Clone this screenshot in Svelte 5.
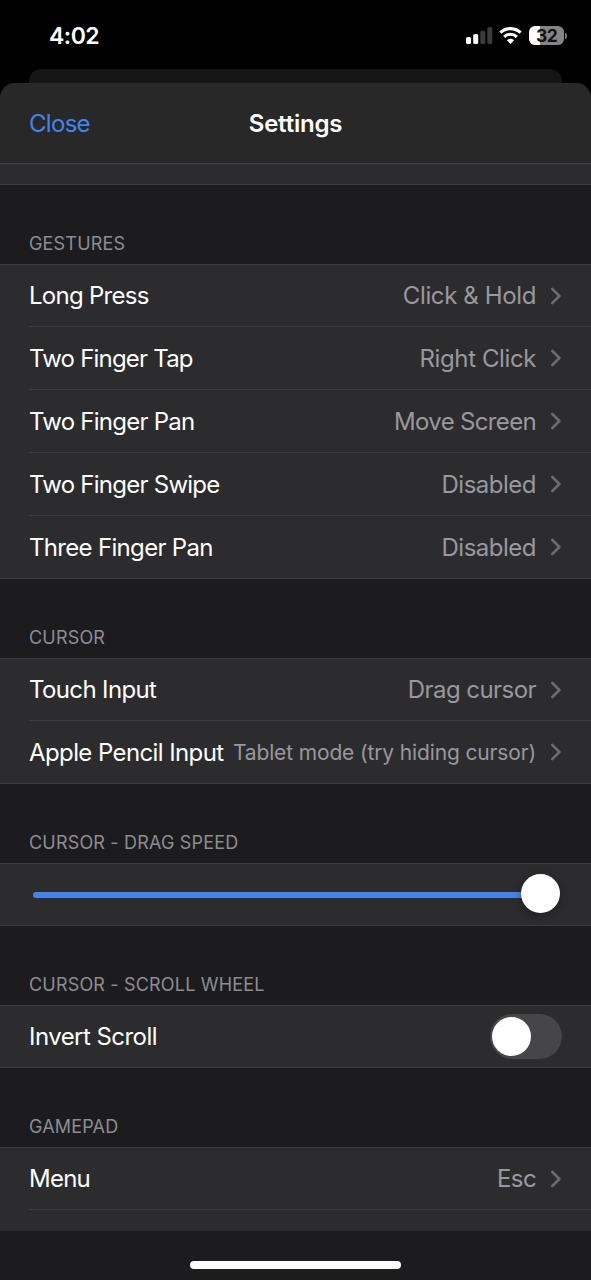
<script>
  // ls / vs: letter spacing in px for the label and the value
  const groups = [
    { title: 'GESTURES', rows: [
      { label: 'Long Press', ls: -0.72, value: 'Click & Hold', vs: -0.38 },
      { label: 'Two Finger Tap', ls: -0.8, value: 'Right Click', vs: -0.4 },
      { label: 'Two Finger Pan', ls: -0.75, value: 'Move Screen', vs: -0.66 },
      { label: 'Two Finger Swipe', ls: -0.75, value: 'Disabled', vs: -0.5 },
      { label: 'Three Finger Pan', ls: -0.68, value: 'Disabled', vs: -0.5 }
    ] },
    { title: 'CURSOR', rows: [
      { label: 'Touch Input', ls: -0.63, value: 'Drag cursor', vs: -0.55 },
      { label: 'Apple Pencil Input', ls: -0.6, value: 'Tablet mode (try hiding cursor)', vs: -0.14, compact: true }
    ] },
    { title: 'CURSOR - DRAG SPEED', rows: [{ slider: 100 }] },
    { title: 'CURSOR - SCROLL WHEEL', rows: [{ label: 'Invert Scroll', ls: -0.55, toggle: true }] },
    { title: 'GAMEPAD', open: true, rows: [{ label: 'Menu', ls: -0.75, value: 'Esc', vs: -0.6 }] }
  ];
</script>

<div class="phone">
  <div class="status">
    <span class="time">4:02</span>
    <div class="indicators">
      <svg class="signal" width="27" height="17" viewBox="0 0 27 17">
        <rect x="0" y="10" width="5" height="7" rx="1.5" fill="#fff" />
        <rect x="7.2" y="7" width="5" height="10" rx="1.5" fill="#fff" />
        <rect x="14.3" y="3.7" width="5" height="13.3" rx="1.5" fill="#3b3b3b" />
        <rect x="21.3" y="0" width="5" height="17" rx="1.5" fill="#3b3b3b" />
      </svg>
      <svg class="wifi" width="23" height="17" viewBox="0 0 23 17">
        <path d="M1.4 5.7 C7 .2 16 .2 21.6 5.7" fill="none" stroke="#fff" stroke-width="3.2" />
        <path d="M5.1 9.8 C8.7 6.4 14.3 6.4 17.9 9.8" fill="none" stroke="#fff" stroke-width="3" />
        <path d="M7.9 13.3 C9.8 11.3 13.2 11.3 15.1 13.3 L11.5 17 Z" fill="#fff" />
      </svg>
      <div class="battery"><span>32</span></div>
      <i class="nub"></i>
    </div>
  </div>
  <div class="behind"></div>
  <div class="sheet">
    <header>
      <span class="close">Close</span>
      <h1>Settings</h1>
      <span></span>
    </header>
    <div class="strip"></div>
    {#each groups as g}
      <h2>{g.title}</h2>
      <section class:open={g.open}>
        {#each g.rows as r}
          <div class="row">
            {#if r.slider}
              <div class="track">
                <div class="fill" style="width: {r.slider}%"></div>
                <div class="knob"></div>
              </div>
            {:else}
              <span class="label" style="letter-spacing: {r.ls}px">{r.label}</span>
              {#if r.toggle}
                <div class="switch"><div class="knob"></div></div>
              {:else}
                <span class="value" class:compact={r.compact} style="letter-spacing: {r.vs}px">{r.value}</span>
                <svg class="chevron" width="12" height="18" viewBox="0 0 12 18">
                  <path d="M2.3 2 L9.4 9 L2.3 16" fill="none" stroke="#6b6b6e" stroke-width="2.7" stroke-linecap="round" stroke-linejoin="round" />
                </svg>
              {/if}
            {/if}
          </div>
        {/each}
      </section>
    {/each}
    <div class="home"><div></div></div>
  </div>
</div>

<style>
  :global(body) { background: #000; }
  .phone {
    width: 591px; height: 1280px; background: #000; overflow: hidden;
    display: flex; flex-direction: column;
    font-family: Inter, "Liberation Sans", sans-serif; color: #fff;
  }
  .status {
    height: 69px; flex: none; box-sizing: border-box; padding: 2px 24px 0 49px;
    display: flex; justify-content: space-between; align-items: center;
  }
  .time { font-size: 23px; font-weight: 600; line-height: 28px; letter-spacing: -0.5px; }
  .indicators { display: flex; align-items: center; }
  .wifi { margin-left: 6px; }
  .battery {
    margin-left: 7px; width: 35px; height: 19px; border-radius: 6px;
    background: linear-gradient(90deg, #fff 11px, #858585 11px);
    display: flex; align-items: center; justify-content: center;
    color: #111; font-size: 17.5px; line-height: 19px; font-weight: 700; letter-spacing: -0.6px;
  }
  .nub { width: 2px; height: 6px; margin-left: 1px; border-radius: 0 3px 3px 0; background: #777; }
  .behind { height: 14px; flex: none; margin: 0 29px; border-radius: 12px 12px 0 0; background: #151515; }
  .sheet {
    height: 1197px; flex: none; background: #1c1c1e; border-radius: 15px 15px 0 0; overflow: hidden;
    display: flex; flex-direction: column;
  }
  header {
    height: 81px; flex: none; box-sizing: border-box; padding: 0 29px; background: #282828;
    border-bottom: 1px solid #434345; display: grid; grid-template-columns: 1fr auto 1fr; align-items: center;
  }
  .close { color: #4484ea; font-size: 24px; letter-spacing: -0.7px; }
  h1 { margin: 0; font-size: 24px; font-weight: 600; letter-spacing: -0.2px; }
  .strip { height: 21px; flex: none; box-sizing: border-box; background: #2c2c2e; border-bottom: 1px solid #3d3d40; }
  h2 {
    height: 79px; flex: none; margin: 0; box-sizing: border-box; padding: 48px 29px 0; font-size: 18px;
    line-height: 22px; font-weight: 400; color: #8d8d92; letter-spacing: 0.18px;
  }
  section { flex: none; background: #2c2c2e; border-top: 1px solid #3d3d40; border-bottom: 1px solid #3d3d40; }
  .row {
    height: 61px; margin-left: 29px; padding-right: 29px; display: flex; align-items: center;
    font-size: 24px; white-space: nowrap;
  }
  .row + .row { height: 62px; border-top: 1px solid #3d3d40; }
  .label { flex: 1; }
  .value { color: #98989e; }
  .value.compact { font-size: 21px; padding-top: 1px; }
  .chevron { margin-left: 14px; flex: none; }
  .track { flex: 1; height: 6px; margin: 0 4px; display: flex; align-items: center; border-radius: 3px; background: #4a4a4e; }
  .fill { height: 6px; border-radius: 3px; background: #4484ea; }
  .knob { width: 39px; height: 39px; flex: none; border-radius: 50%; background: #fff; }
  .track .knob { margin: -3px -2px 0 -37px; box-shadow: 0 2px 10px #0005; }
  .switch {
    width: 72px; height: 45px; box-sizing: border-box; padding: 3px 2px; border-radius: 23px;
    background: #464649;
  }
  .open { border-bottom: 0; }
  .open::after { content: ''; display: block; height: 21px; margin-left: 29px; border-top: 1px solid #3d3d40; }
  .home { flex: 1; display: flex; justify-content: center; align-items: flex-start; padding-top: 30px; }
  .home div { width: 211px; height: 8px; border-radius: 4px; background: #fff; }
</style>
